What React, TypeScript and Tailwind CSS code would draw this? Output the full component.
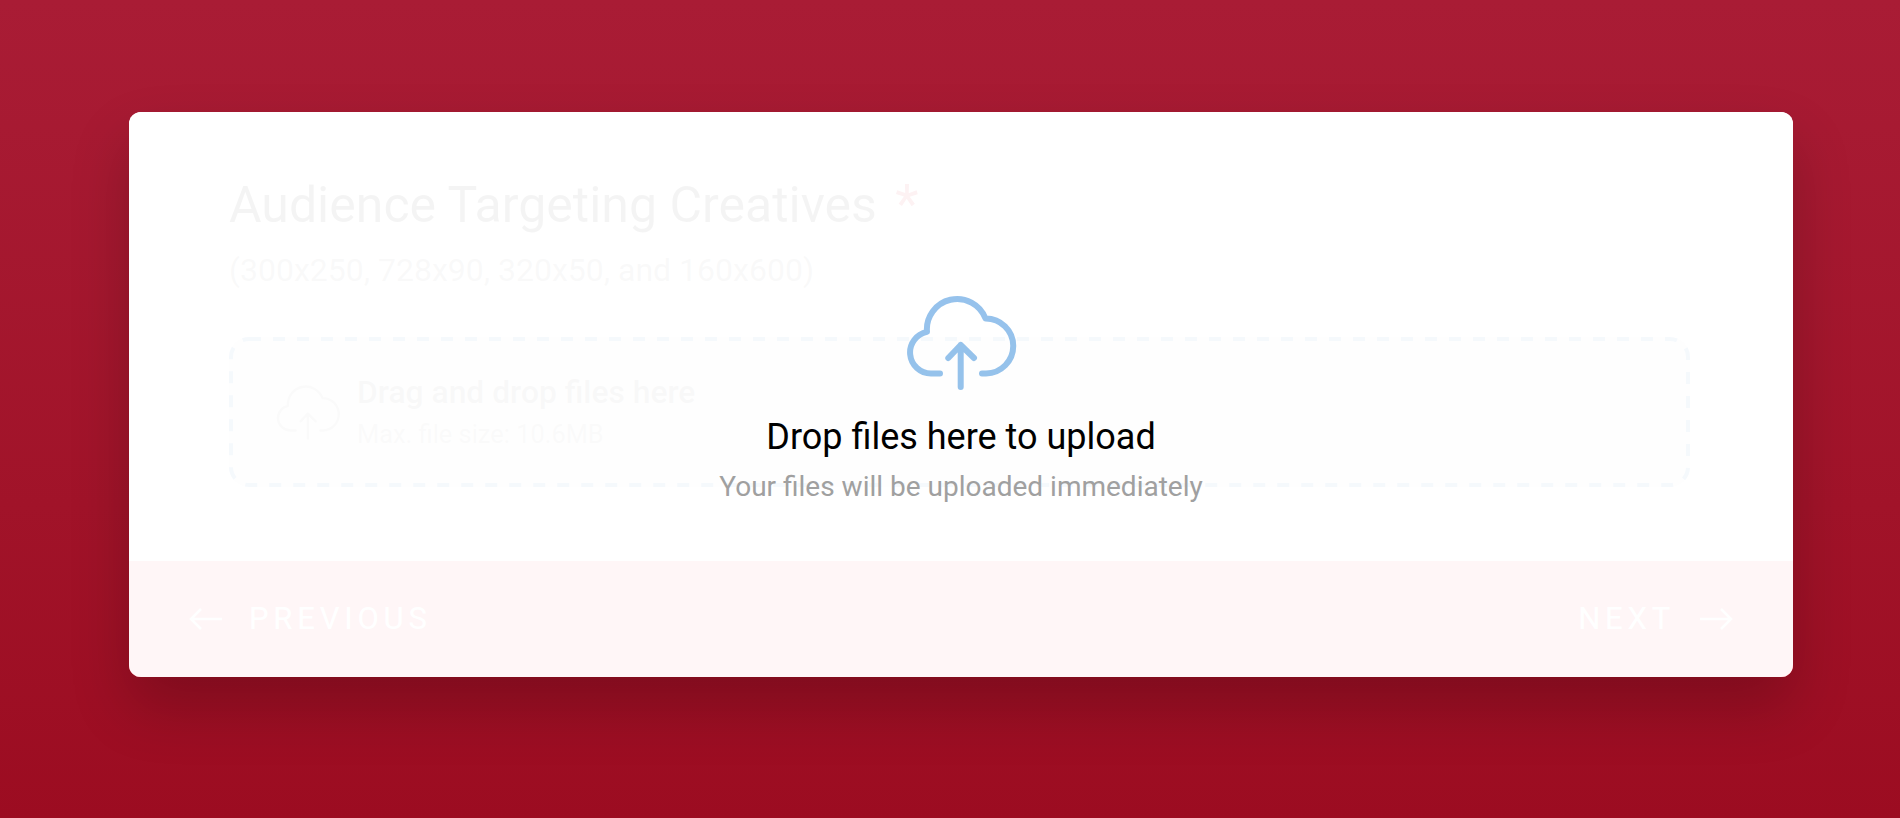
const CLOUD = "M60 93.5H51A21 21 0 0 1 47 51.9A30.3 30.3 0 0 1 105.5 38.5A27.5 27.5 0 0 1 106 93.5H102";

function CloudIcon({ className, sw }: { className: string; sw: number }) {
  return (
    <svg viewBox="25 13 112 100" className={className} fill="none" stroke="currentColor" strokeWidth={sw} strokeLinecap="round" strokeLinejoin="round">
      <path d={CLOUD} />
      <path d="M80.7 107V65M68.3 78L80.7 65L94 78" />
    </svg>
  );
}

function ArrowIcon({ left }: { left?: boolean }) {
  return (
    <svg viewBox="0 0 34 24" className="w-[34px] h-[24px]" fill="none" stroke="currentColor" strokeWidth="2.5">
      {left ? <path d="M33 12H2M12 2L2 12L12 22" /> : <path d="M1 12H32M22 2L32 12L22 22" />}
    </svg>
  );
}

export default function App() {
  return (
    <div className="min-h-[818px] bg-gradient-to-b from-[#a91c35] to-[#9c0c21] flex pl-[129px] pt-[112px] font-['Roboto',sans-serif]">
      <div className="relative w-[1664px] h-[565px] rounded-[12px] overflow-hidden shadow-[0_30px_60px_rgba(0,0,0,0.2)] flex flex-col bg-white">
        <div className="h-[449px] pt-[66px] px-[100px]">
          <h1 className="h-[54px] text-[50px] leading-[54px] text-[#333333] font-normal">
            Audience Targeting Creatives <span className="ml-[6px] text-[54px] leading-[40px] text-[#d0021b]">*</span>
          </h1>
          <p className="mt-[18px] text-[32px] leading-[40px] text-[#888888]">(300x250, 728x90, 320x50, and 160x600)</p>
          <div className="relative mt-[47px] h-[150px] w-[1461px] rounded-[20px] bg-[#e8e8e8] flex items-center pl-[46px] gap-[16px]">
            <svg className="absolute inset-0 w-full h-full" fill="none">
              <rect x="2" y="2" width="1457" height="146" rx="18" stroke="#3f80c8" strokeWidth="4" strokeDasharray="12 12" />
            </svg>
            <CloudIcon className="w-[66px] h-[59px] text-[#999999]" sw={4} />
            <div className="-mt-[2px]">
              <div className="text-[31.8px] leading-[38px] font-medium text-[#777777]">Drag and drop files here</div>
              <div className="mt-[8px] text-[25.4px] leading-[30px] text-[#999999]">Max. file size: 10.6MB</div>
            </div>
          </div>
        </div>
        <div className="flex-1 bg-[#ff4b5f] text-white flex items-center justify-between px-[60px] text-[31px] tracking-[4.8px]">
          <div className="flex items-center gap-[26px]">
            <ArrowIcon left />
            <span>PREVIOUS</span>
          </div>
          <div className="flex items-center gap-[24px]">
            <span>NEXT</span>
            <ArrowIcon />
          </div>
        </div>
        <div className="absolute inset-0 bg-white/95 flex flex-col items-center pt-[181px]">
          <CloudIcon className="w-[112px] h-[100px] text-[#6aa9e4] opacity-70" sw={6} />
          <div className="mt-[24px] text-[36px] leading-[40px] text-black">Drop files here to upload</div>
          <div className="mt-[14px] text-[28px] leading-[32px] text-[#a0a0a0]">Your files will be uploaded immediately</div>
        </div>
      </div>
    </div>
  );
}
